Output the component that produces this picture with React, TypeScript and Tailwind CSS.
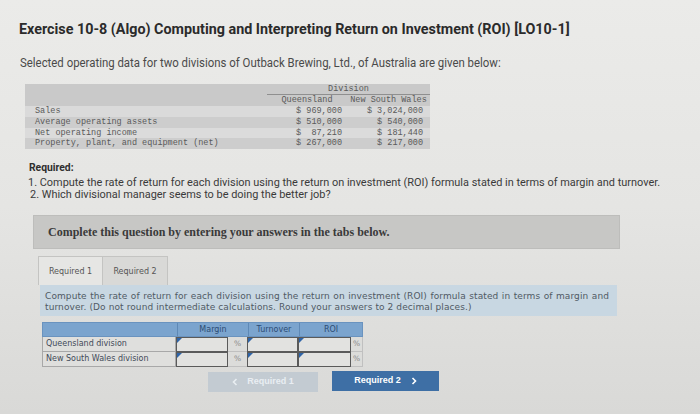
import React from "react";

function Flag() {
  return (
    <svg className="absolute left-0 top-0" width="5" height="5" viewBox="0 0 5 5">
      <polygon points="0,0 5,0 0,5" fill="#2f64a8" />
    </svg>
  );
}

function InputCell({ w }: { w: string }) {
  return (
    <div className={`relative h-full ${w} border border-[#5a5a5a] bg-[#e2e2e0]`}>
      <Flag />
    </div>
  );
}

export default function App() {
  const rows = [
    { label: "Sales", q: "$ 969,000", n: "$ 3,024,000", bg: "bg-[#dadada]" },
    { label: "Average operating assets", q: "$ 510,000", n: "$ 540,000", bg: "bg-[#cdcdcd]" },
    { label: "Net operating income", q: "$\u00a0\u00a087,210", n: "$ 181,440", bg: "bg-[#dbdbdb]" },
    { label: "Property, plant, and equipment (net)", q: "$ 267,000", n: "$ 217,000", bg: "bg-[#cdcdcd]" },
  ];

  return (
    <div className="w-[700px] h-[414px] overflow-hidden bg-linear-to-b from-[#ebebe9] via-[#e5e5e3] to-[#d9d9d7] font-['Roboto',sans-serif] text-[#333]">
      {/* Title */}
      <div className="mt-[20px] h-[18px] pl-[19px] flex items-center whitespace-nowrap">
        <span className="inline-block origin-left scale-x-[0.955] text-[15px] font-bold leading-[18px] text-[#2b2b2b]">
          Exercise 10-8 (Algo) Computing and Interpreting Return on Investment (ROI) [LO10-1]
        </span>
      </div>

      {/* Subtitle */}
      <div className="mt-[17px] h-[16px] pl-[20px] flex items-center whitespace-nowrap">
        <span className="inline-block origin-left scale-x-[0.95] text-[12px] leading-[16px] text-[#4a4a4a]">
          Selected operating data for two divisions of Outback Brewing, Ltd., of Australia are given below:
        </span>
      </div>

      {/* Data table */}
      <div className="mt-[13px] ml-[25px] w-[405px] font-['Liberation_Mono',monospace] text-[8.5px] text-[#5a5a5a] whitespace-pre">
        <div className="h-[22px] bg-[#c9c9c9] grid grid-cols-[242px_80px_83px]">
          <div />
          <div className="col-span-2 flex flex-col">
            <div className="h-[11px] border-b border-[#8f8f8f] flex items-center justify-center leading-none">Division</div>
            <div className="h-[11px] grid grid-cols-[80px_83px] leading-none">
              <div className="flex items-center justify-center">Queensland</div>
              <div className="flex items-center justify-center">New South Wales</div>
            </div>
          </div>
        </div>
        {rows.map((r) => (
          <div key={r.label} className={`h-[10.75px] grid grid-cols-[242px_80px_83px] items-center leading-none ${r.bg}`}>
            <div className="pl-[10px]">{r.label}</div>
            <div className="text-right pr-[5px]">{r.q}</div>
            <div className="text-right pr-[7px]">{r.n}</div>
          </div>
        ))}
      </div>

      {/* Required */}
      <div className="mt-[12px] whitespace-nowrap">
        <div className="h-[12px] pl-[29px] flex items-center">
          <span className="inline-block origin-left scale-x-[0.94] text-[11px] font-bold text-[#2e2e2e] leading-none">Required:</span>
        </div>
        <div className="mt-[3px] h-[12px] pl-[28px] flex items-center">
          <span className="inline-block origin-left scale-x-[0.993] text-[11px] text-[#3a3a3a] leading-none">
            1. Compute the rate of return for each division using the return on investment (ROI) formula stated in terms of margin and turnover.
          </span>
        </div>
        <div className="h-[12px] pl-[30px] flex items-center">
          <span className="inline-block origin-left scale-x-[0.993] text-[11px] text-[#3a3a3a] leading-none">
            2. Which divisional manager seems to be doing the better job?
          </span>
        </div>
      </div>

      {/* Gray instruction box */}
      <div className="mt-[15px] ml-[33px] w-[587px] h-[34px] bg-[#c7c7c5] border border-[#bdbdbb] flex items-center pl-[14px]">
        <span className="font-['Liberation_Serif',serif] font-bold text-[12px] text-[#3a3a3a] whitespace-nowrap">
          Complete this question by entering your answers in the tabs below.
        </span>
      </div>

      {/* Tabs */}
      <div className="mt-[7px] ml-[38px] h-[29px] flex font-['DejaVu_Sans',sans-serif] text-[8px] text-[#555]">
        <div className="w-[65px] h-full border border-b-0 border-[#c4c4c2] bg-[#e6e6e4] flex items-center justify-center pt-[2px]">
          Required 1
        </div>
        <div className="w-[65px] h-full border border-l-0 border-b-0 border-[#c4c4c2] bg-[#d9d9d7] flex items-center justify-center pt-[2px]">
          Required 2
        </div>
      </div>

      {/* Blue instruction */}
      <div className="ml-[40px] w-[577px] h-[31px] bg-[#c8d7e2] pl-[5px] pr-[8px] pt-[6px] font-['DejaVu_Sans',sans-serif] text-[9px] tracking-[0.1px] leading-[10.5px] text-[#505a64] text-justify">
        Compute the rate of return for each division using the return on investment (ROI) formula stated in terms of margin and turnover. (Do not round intermediate calculations. Round your answers to 2 decimal places.)
      </div>

      {/* Answer table */}
      <div className="mt-[6px] ml-[42px] w-[321px] font-['DejaVu_Sans',sans-serif] text-[8px]">
        <div className="h-[15px] flex bg-[#7ba4ce] border border-[#6a93bf] text-[#2d4c74]">
          <div className="w-[134px]" />
          <div className="w-[71px] border-l border-[#5f89b6] flex items-center justify-center">Margin</div>
          <div className="w-[51px] border-l border-[#5f89b6] flex items-center justify-center">Turnover</div>
          <div className="flex-1 border-l border-[#5f89b6] flex items-center justify-center">ROI</div>
        </div>
        {["Queensland division", "New South Wales division"].map((l) => (
          <div key={l} className="h-[15px] flex">
            <div className="w-[134px] h-full border border-t-0 border-[#a8a8a8] bg-[#dfdfdd] flex items-center pl-[3px] text-[#3f4a58]">
              {l}
            </div>
            <InputCell w="w-[52px]" />
            <div className="w-[19px] h-full bg-[#dcdcda] border-b border-[#c0c0c0] flex items-center justify-center text-[#8a8a8a] text-[7.5px]">%</div>
            <InputCell w="w-[51px]" />
            <InputCell w="w-[53px]" />
            <div className="w-[12px] h-full bg-[#dcdcda] border-b border-r border-[#c0c0c0] flex items-center justify-center text-[#8a8a8a] text-[7.5px]">%</div>
          </div>
        ))}
      </div>

      {/* Buttons */}
      <div className="mt-[5px] flex font-['Liberation_Sans',sans-serif]">
        <div className="ml-[208px] w-[110px] h-[20px] bg-[#c3cbd2] flex items-center justify-center gap-[9px] text-[#e9eef2] text-[9px] font-bold">
          <svg width="6" height="8" viewBox="0 0 6 8"><polyline points="4.5,1 1.5,4 4.5,7" fill="none" stroke="#e9eef2" strokeWidth="1.6" /></svg>
          <span>Required 1</span>
        </div>
        <div className="ml-[14px] -mt-[1px] w-[107px] h-[20px] bg-[#3e6fa5] flex items-center justify-center gap-[10px] text-white text-[9px] font-bold">
          <span>Required 2</span>
          <svg width="6" height="8" viewBox="0 0 6 8"><polyline points="1.5,1 4.5,4 1.5,7" fill="none" stroke="#ffffff" strokeWidth="1.6" /></svg>
        </div>
      </div>
    </div>
  );
}
